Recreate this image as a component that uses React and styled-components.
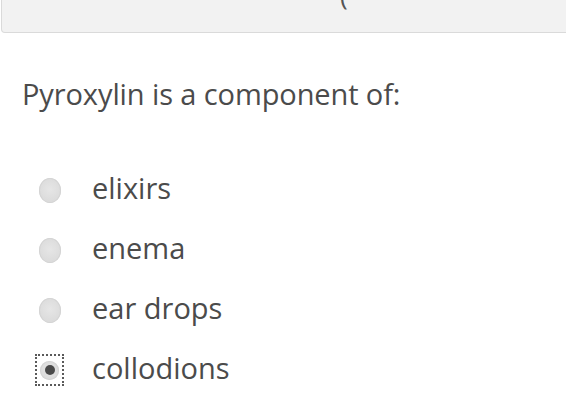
import React from "react";
import styled, { createGlobalStyle } from "styled-components";

const Global = createGlobalStyle`
  html, body { margin: 0; padding: 0; background: #ffffff; }
  body { font-family: "Open Sans", "Noto Sans", sans-serif; color: #4b4b4b; overflow: hidden; }
`;

const Page = styled.div`
  width: 566px;
  height: 415px;
  display: flex;
  flex-direction: column;
  overflow: hidden;
`;

const TopBar = styled.div`
  flex: none;
  margin-left: 1px;
  margin-right: -10px;
  height: 32px;
  background: #f2f2f2;
  border: 1px solid #dadada;
  border-top: none;
  border-radius: 0 0 4px 4px;
  overflow: hidden;
  display: flex;
  justify-content: flex-start;
  padding-left: 338px;
`;

const Clipped = styled.span`
  display: block;
  font-size: 26px;
  line-height: 26px;
  margin-top: -18px;
  color: #555;
`;

const Question = styled.p`
  margin: 43px 0 0 22px;
  font-size: 29px;
  line-height: 36px;
  color: #4b4b4b;
  letter-spacing: -0.1px;
`;

const Options = styled.div`
  margin-top: 66px;
  display: flex;
  flex-direction: column;
  gap: 36px;
  padding-left: 37px;
`;

const Option = styled.label`
  display: flex;
  align-items: center;
  height: 24px;
  gap: 29px;
  font-size: 29px;
  line-height: 24px;
  color: #4b4b4b;
`;

const Text = styled.span`
  padding-bottom: 4px;
`;

const RadioWrap = styled.span`
  flex: none;
  width: 26px;
  height: 32px;
  display: flex;
  align-items: center;
  justify-content: center;
  box-sizing: border-box;
  border: 2px dotted ${(p) => (p.focused ? "#5a5a5a" : "transparent")};
  margin: 0 ${(p) => (p.focused ? "-1px" : "0")} 0 ${(p) => (p.focused ? "-2px" : "0")};
  ${(p) => (p.focused ? "width: 29px;" : "")}
`;

const Radio = styled.span`
  width: ${(p) => (p.focused ? "19px" : "25px")};
  height: ${(p) => (p.focused ? "19px" : "25px")};
  border-radius: 50%;
  background: radial-gradient(circle at 50% 45%, #e6e6e6 0%, #dbdbdb 70%, #d2d2d2 100%);
  box-shadow: inset 0 0 0 1px #d4d4d4;
  display: flex;
  align-items: center;
  justify-content: center;
`;

const Dot = styled.span`
  width: 10px;
  height: 10px;
  border-radius: 50%;
  background: #4a4a4a;
`;

const options = [
  { label: "elixirs", checked: false },
  { label: "enema", checked: false },
  { label: "ear drops", checked: false },
  { label: "collodions", checked: true },
];

export default function App() {
  return (
    <Page>
      <Global />
      <TopBar>
        <Clipped>(</Clipped>
      </TopBar>
      <Question>Pyroxylin is a component of:</Question>
      <Options>
        {options.map((o) => (
          <Option key={o.label}>
            <RadioWrap focused={o.checked}>
              <Radio focused={o.checked}>{o.checked && <Dot />}</Radio>
            </RadioWrap>
            <Text>{o.label}</Text>
          </Option>
        ))}
      </Options>
    </Page>
  );
}
